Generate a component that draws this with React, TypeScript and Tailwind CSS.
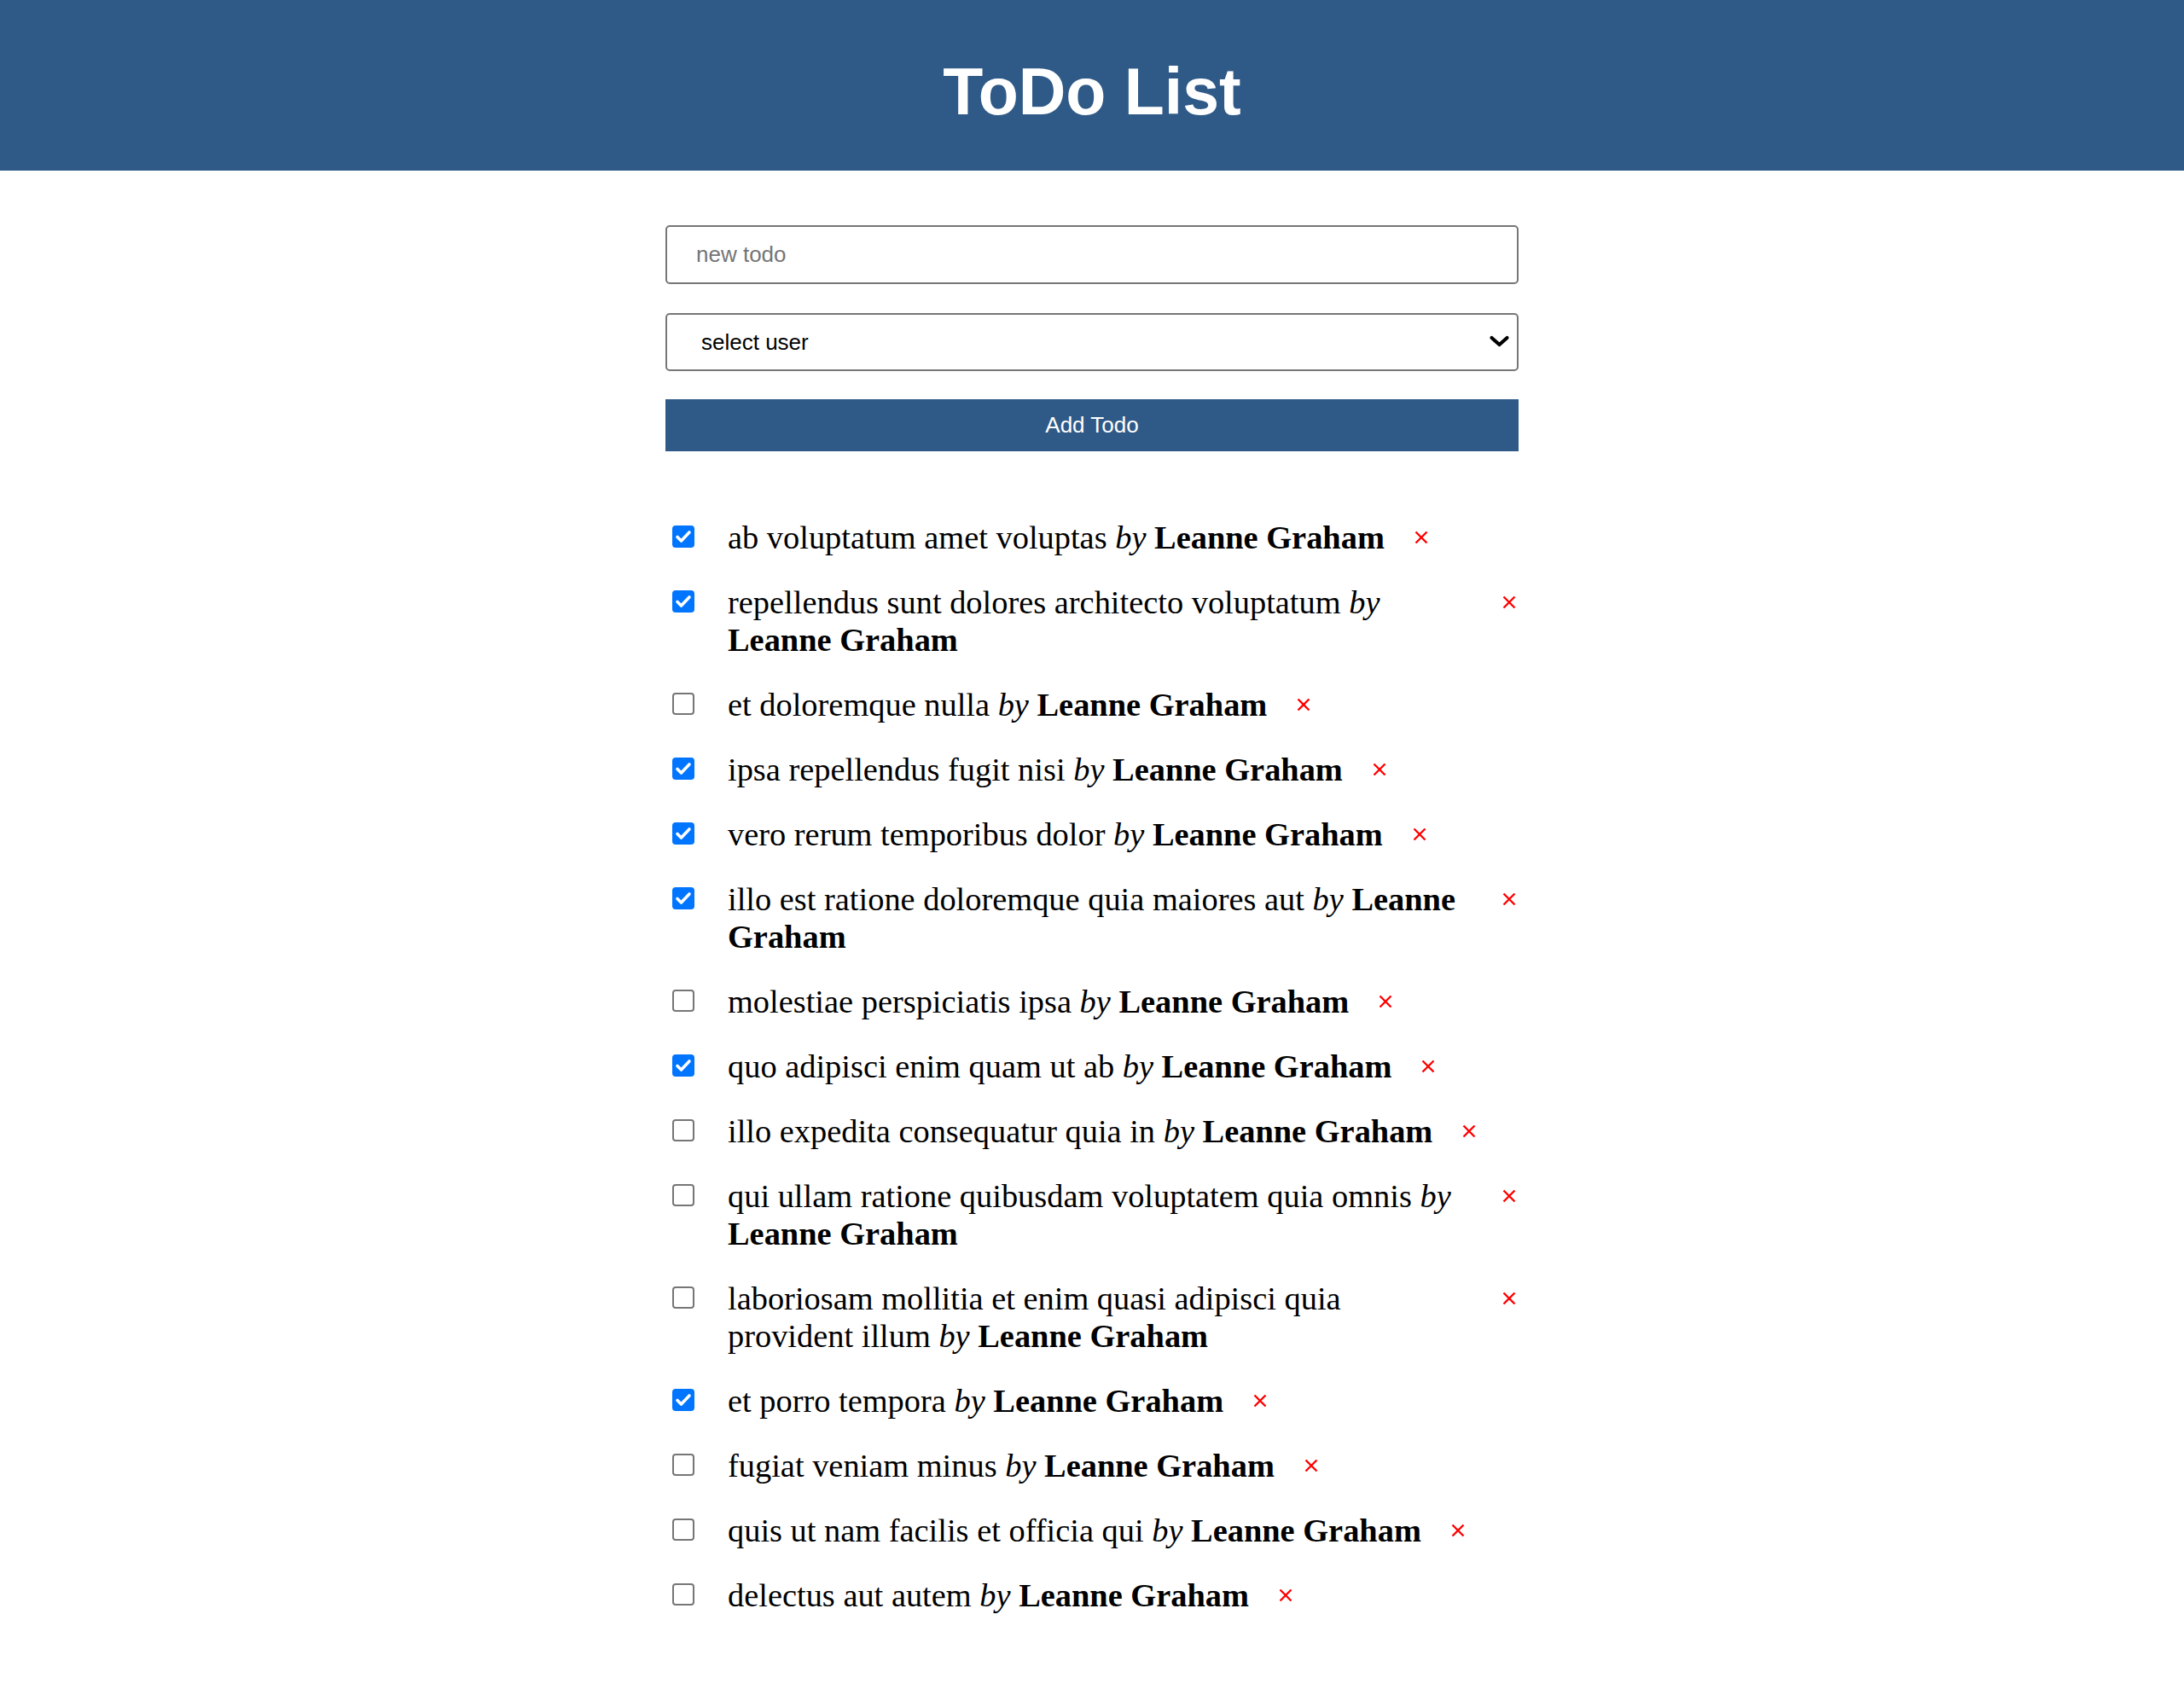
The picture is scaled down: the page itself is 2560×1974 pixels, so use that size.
import React, { useState } from 'react';

interface Todo {
  id: number;
  title: string;
  completed: boolean;
  user: string;
}

const initialTodos: Todo[] = [
  { id: 1, title: 'ab voluptatum amet voluptas', completed: true, user: 'Leanne Graham' },
  { id: 2, title: 'repellendus sunt dolores architecto voluptatum', completed: true, user: 'Leanne Graham' },
  { id: 3, title: 'et doloremque nulla', completed: false, user: 'Leanne Graham' },
  { id: 4, title: 'ipsa repellendus fugit nisi', completed: true, user: 'Leanne Graham' },
  { id: 5, title: 'vero rerum temporibus dolor', completed: true, user: 'Leanne Graham' },
  { id: 6, title: 'illo est ratione doloremque quia maiores aut', completed: true, user: 'Leanne Graham' },
  { id: 7, title: 'molestiae perspiciatis ipsa', completed: false, user: 'Leanne Graham' },
  { id: 8, title: 'quo adipisci enim quam ut ab', completed: true, user: 'Leanne Graham' },
  { id: 9, title: 'illo expedita consequatur quia in', completed: false, user: 'Leanne Graham' },
  { id: 10, title: 'qui ullam ratione quibusdam voluptatem quia omnis', completed: false, user: 'Leanne Graham' },
  { id: 11, title: 'laboriosam mollitia et enim quasi adipisci quia provident illum', completed: false, user: 'Leanne Graham' },
  { id: 12, title: 'et porro tempora', completed: true, user: 'Leanne Graham' },
  { id: 13, title: 'fugiat veniam minus', completed: false, user: 'Leanne Graham' },
  { id: 14, title: 'quis ut nam facilis et officia qui', completed: false, user: 'Leanne Graham' },
  { id: 15, title: 'delectus aut autem', completed: false, user: 'Leanne Graham' },
];

interface CheckboxProps {
  checked: boolean;
  onToggle: () => void;
}

const Checkbox: React.FC<CheckboxProps> = ({ checked, onToggle }) => {
  return (
    <button
      type="button"
      role="checkbox"
      aria-checked={checked}
      onClick={onToggle}
      className={
        checked
          ? 'mt-[8px] ml-2 w-[26px] h-[26px] shrink-0 rounded-[4px] bg-[#0075ff] flex items-center justify-center'
          : 'mt-[8px] ml-2 w-[26px] h-[26px] shrink-0 rounded-[4px] bg-white border-[2.5px] border-[#767676]'
      }
    >
      {checked && (
        <svg width="26" height="26" viewBox="0 0 26 26" fill="none">
          <path d="M6 13.5l4.5 4.5L20 8" stroke="white" strokeWidth={3.6} strokeLinecap="round" strokeLinejoin="round" />
        </svg>
      )}
    </button>
  );
};

const App: React.FC = () => {
  const [todos, setTodos] = useState<Todo[]>(initialTodos);
  const [title, setTitle] = useState('');
  const [user, setUser] = useState('');

  const toggle = (id: number) =>
    setTodos(todos.map((t) => (t.id === id ? { ...t, completed: !t.completed } : t)));

  const remove = (id: number) => setTodos(todos.filter((t) => t.id !== id));

  const addTodo = () => {
    if (!title.trim() || !user) return;
    setTodos([...todos, { id: Date.now(), title: title.trim(), completed: false, user }]);
    setTitle('');
  };

  return (
    <div className="min-h-screen bg-white">
      <header className="h-[200px] bg-[#2f5a87] pt-[63px]">
        <h1 className="text-center text-white font-bold text-[77px] leading-[88px] font-['Liberation_Sans',Arial,sans-serif]">
          ToDo List
        </h1>
      </header>

      <main className="w-[1000px] mx-auto pt-[64px] pb-[60px]">
        <div className="flex flex-col font-['Liberation_Sans',Arial,sans-serif] text-[26px]">
          <input
            type="text"
            value={title}
            onChange={(e) => setTitle(e.target.value)}
            placeholder="new todo"
            className="h-[69px] w-full border-2 border-[#767676] rounded-[5px] pl-[34px] text-black placeholder:text-[#757575] outline-none"
          />

          <div className="relative mt-[34px]">
            <select
              value={user}
              onChange={(e) => setUser(e.target.value)}
              className="h-[68px] w-full appearance-none border-2 border-[#767676] rounded-[5px] pl-[40px] text-black bg-white outline-none"
            >
              <option value="">select user</option>
              <option value="Leanne Graham">Leanne Graham</option>
              <option value="Ervin Howell">Ervin Howell</option>
              <option value="Clementine Bauch">Clementine Bauch</option>
            </select>
            <svg
              className="absolute right-[10px] top-[26px] pointer-events-none"
              width="25"
              height="14"
              viewBox="0 0 25 14"
              fill="none"
            >
              <path d="M3.5 3l9 8 9-8" stroke="black" strokeWidth={4.2} strokeLinecap="round" strokeLinejoin="round" />
            </svg>
          </div>

          <button
            type="button"
            onClick={addTodo}
            className="mt-[33px] h-[61px] w-full bg-[#2f5a87] text-white"
          >
            Add Todo
          </button>
        </div>

        <ul className="mt-[63px] font-['Liberation_Serif','Times_New_Roman',serif] text-[38.4px] leading-[44px] text-black">
          {todos.map((todo) => (
            <li key={todo.id} className="flex items-start py-4">
              <Checkbox checked={todo.completed} onToggle={() => toggle(todo.id)} />
              <span className="ml-[39px] min-w-0">
                {todo.title} <i>by</i> <b>{todo.user}</b>
              </span>
              <button
                type="button"
                onClick={() => remove(todo.id)}
                className="ml-[35px] mr-[3px] h-[44px] shrink-0 flex items-center"
                title="Delete"
              >
                <svg width="16" height="16" viewBox="0 0 16 16" fill="none">
                  <path d="M1.5 1.5l13 13M14.5 1.5l-13 13" stroke="#ff0000" strokeWidth={2.4} />
                </svg>
              </button>
            </li>
          ))}
        </ul>
      </main>
    </div>
  );
};

export default App;
